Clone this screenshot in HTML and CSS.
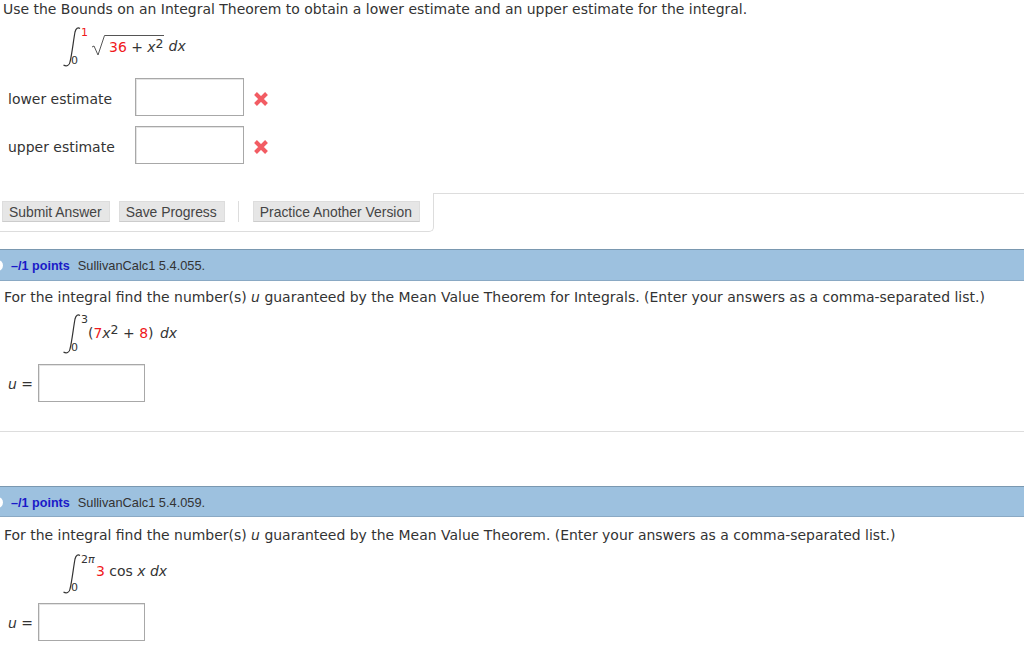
FILE: index.html
```html
<!DOCTYPE html>
<html lang="en">
<head>
    <meta charset="UTF-8">
    <meta name="viewport" content="width=device-width, initial-scale=1.0">
    <title>Homework</title>
    <link rel="stylesheet" href="styles.css">
</head>
<body>
    <p class="prompt first">Use the Bounds on an Integral Theorem to obtain a lower estimate and an upper estimate for the integral.</p>
    <div class="formula top">
        <svg class="integral" width="18" height="40" viewBox="0 0 18 40"><path d="M17 1.500C15 0 13 1 12 5C10.500 13 9 27 7 35C6.500 38.500 3.500 40 .5 38" fill="none" stroke="#333" stroke-width="1.200"/></svg>
        <div class="limits mid"><span class="upper red">1</span><span class="lower">0</span></div>
        <svg class="root" width="16" height="21" viewBox="0 0 16 21"><path d="M1 12L3 11L7 20L13.500 .5H16" fill="none" stroke="#555" stroke-width="1"/></svg>
        <span class="expr radicand"><span class="red">36</span> + <i>x</i><sup>2</sup></span>
        <span class="expr dx"><i>dx</i></span>
    </div>
    <div class="answer-row">
        <label>lower estimate</label>
        <input class="box" type="text">
        <svg class="cross" width="16" height="16" viewBox="0 0 16 16"><path d="M2.500 2.500L13.500 13.500M13.500 2.500L2.500 13.500" stroke="#f25c63" stroke-width="4"/></svg>
    </div>
    <div class="answer-row">
        <label>upper estimate</label>
        <input class="box" type="text">
        <svg class="cross" width="16" height="16" viewBox="0 0 16 16"><path d="M2.500 2.500L13.500 13.500M13.500 2.500L2.500 13.500" stroke="#f25c63" stroke-width="4"/></svg>
    </div>
    <div class="toolbar">
        <div class="actions">
            <button class="btn">Submit Answer</button>
            <button class="btn">Save Progress</button>
            <span class="divider"></span>
            <button class="btn">Practice Another Version</button>
        </div>
        <div class="toolbar-rest"></div>
    </div>

    <div class="qhead">
        <span class="dot"></span>
        <b>–/1 points</b>
        <span>SullivanCalc1 5.4.055.</span>
    </div>
    <p class="prompt">For the integral find the number(s) <i>u</i> guaranteed by the Mean Value Theorem for Integrals. (Enter your answers as a comma-separated list.)</p>
    <div class="formula">
        <svg class="integral" width="18" height="40" viewBox="0 0 18 40"><path d="M17 1.500C15 0 13 1 12 5C10.500 13 9 27 7 35C6.500 38.500 3.500 40 .5 38" fill="none" stroke="#333" stroke-width="1.200"/></svg>
        <div class="limits"><span class="upper">3</span><span class="lower">0</span></div>
        <span class="expr">(<span class="red">7</span><i>x</i><sup>2</sup> + <span class="red">8</span>) <i class="dx-tail">dx</i></span>
    </div>
    <div class="u-row">
        <label><i>u</i> =</label>
        <input class="box short" type="text">
    </div>
    <hr class="sep">

    <div class="qhead second">
        <span class="dot"></span>
        <b>–/1 points</b>
        <span>SullivanCalc1 5.4.059.</span>
    </div>
    <p class="prompt last">For the integral find the number(s) <i>u</i> guaranteed by the Mean Value Theorem. (Enter your answers as a comma-separated list.)</p>
    <div class="formula last">
        <svg class="integral" width="18" height="40" viewBox="0 0 18 40"><path d="M17 1.500C15 0 13 1 12 5C10.500 13 9 27 7 35C6.500 38.500 3.500 40 .5 38" fill="none" stroke="#333" stroke-width="1.200"/></svg>
        <div class="limits wide"><span class="upper">2<i>π</i></span><span class="lower">0</span></div>
        <span class="expr"><span class="red">3</span> cos <i>x</i> <i>dx</i></span>
    </div>
    <div class="u-row">
        <label><i>u</i> =</label>
        <input class="box short" type="text">
    </div>
</body>
</html>
```
FILE: styles.css
```css
html, body {
    margin: 0;
    padding: 0;
    background: #fff;
    overflow: hidden;
}
body {
    font-family: "DejaVu Sans", Verdana, sans-serif;
    font-size: 13.96px;
    color: #333;
}
.prompt {
    margin: 0;
    padding: 8px 0 0 4px;
    height: 23px;
    line-height: 17px;
    white-space: nowrap;
}
.prompt.first {
    padding: 0 0 0 3px;
    height: 24px;
    line-height: 18px;
}
.prompt.last {
    padding-top: 10px;
    height: 23px;
}
.red {
    color: #f01820;
}
.formula {
    display: flex;
    align-items: flex-start;
    box-sizing: border-box;
    height: 45px;
    padding: 2px 0 0 63px;
}
.formula.top {
    height: 46px;
    padding-top: 3px;
}
.formula.last {
    height: 46px;
    padding-top: 4px;
}
.formula.last .expr {
    margin-top: 9px;
}
.limits {
    display: flex;
    flex-direction: column;
    justify-content: space-between;
    width: 7px;
    height: 40px;
    font-size: 11px;
    line-height: 12px;
}
.limits.mid {
    width: 10px;
}
.limits.wide {
    width: 15px;
}
.lower {
    margin-left: -10px;
}
.expr {
    margin-top: 11px;
    line-height: 17px;
}
.expr sup {
    font-size: 12.5px;
    line-height: 0;
    vertical-align: 4px;
}
.root {
    margin-top: 8px;
}
.radicand {
    border-top: 1px solid #555;
    margin-top: 8px;
    padding: 3px 0 0 2px;
}
.dx {
    margin-left: 5px;
}
.dx-tail {
    margin-left: 2px;
}
.answer-row {
    display: flex;
    align-items: center;
    height: 38px;
    margin: 8px 0 10px;
    padding-left: 8px;
}
.answer-row label {
    width: 127px;
    padding-top: 3px;
}
.box {
    box-sizing: border-box;
    width: 109px;
    height: 38px;
    margin: 0;
    border: 1px solid #a8a8a8;
    background: #fff;
    box-shadow: inset 1px 1px 0 #e4e4e4;
}
.box.short {
    width: 107px;
}
.cross {
    margin: 4px 0 0 9px;
}
.toolbar {
    display: flex;
    margin-top: 29px;
}
.actions {
    display: flex;
    align-items: center;
    box-sizing: border-box;
    width: 434px;
    height: 39px;
    padding: 0 0 1px 2px;
    border-right: 1px solid #ddd;
    border-bottom: 1px solid #ddd;
    border-bottom-right-radius: 5px;
}
.toolbar-rest {
    flex: 1;
    border-top: 1px solid #ddd;
}
.btn {
    height: 21px;
    margin: 0 9px 0 0;
    padding: 1px 7px 0 6px;
    border: 1px solid #ddd;
    border-bottom-color: #ccc;
    background: #e6e6e6;
    color: #444;
    font-family: "Liberation Sans", Arial, sans-serif;
    font-size: 13.9px;
}
.divider {
    width: 1px;
    height: 21px;
    margin: 0 14px 0 4px;
    background: #ddd;
}
.qhead {
    display: flex;
    align-items: center;
    gap: 8px;
    box-sizing: border-box;
    height: 32px;
    margin-top: 17px;
    padding: 1px 0 0 11px;
    position: relative;
    background: #9dc1df;
    border-top: 1px solid #7a98b0;
    border-bottom: 1px solid #8aa9c4;
    font-family: "Liberation Sans", Arial, sans-serif;
    font-size: 12.8px;
}
.qhead.second {
    height: 31px;
    margin-top: 0;
    padding-top: 2px;
}
.qhead b {
    font-size: 12.6px;
    color: #1a1ac8;
}
.dot {
    position: absolute;
    left: -8px;
    top: 10px;
    width: 11px;
    height: 11px;
    border-radius: 50%;
    background: #fff;
}
.u-row {
    display: flex;
    align-items: center;
    height: 38px;
    margin-top: 7px;
    padding-left: 8px;
}
.u-row label {
    width: 30px;
    padding-top: 2px;
}
.sep {
    margin: 29px 0 54px;
    border: 0;
    border-top: 1px solid #ddd;
}
```
